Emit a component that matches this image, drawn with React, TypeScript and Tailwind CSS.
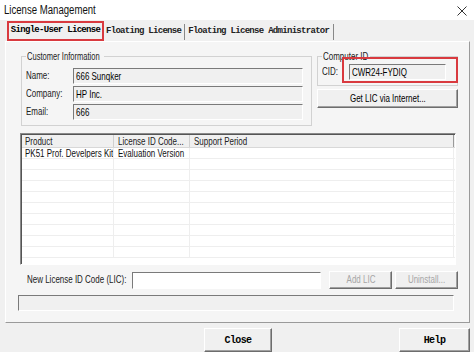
import React from "react";

const sans = { fontFamily: '"Liberation Sans", Arial, sans-serif' } as React.CSSProperties;
const mono = { fontFamily: '"Liberation Mono", "Courier New", monospace' } as React.CSSProperties;

function T({ children, center = false }: { children: React.ReactNode; center?: boolean }) {
  return (
    <span className={`inline-block whitespace-nowrap scale-x-[0.76] ${center ? "origin-center" : "origin-left"}`}>
      {children}
    </span>
  );
}

function Field({ value, className = "" }: { value: string; className?: string }) {
  return (
    <div
      className={`h-[16px] border-t border-l border-t-[#7a7a7a] border-l-[#7a7a7a] border-b border-r border-b-white border-r-white bg-[#f0f0f0] pl-[2px] text-[10.5px] leading-[14px] text-black overflow-hidden ${className}`}
    >
      <T>{value}</T>
    </div>
  );
}

function Button({ label, disabled = false, className = "" }: { label: string; disabled?: boolean; className?: string }) {
  return (
    <div
      className={`flex items-center justify-center border border-t-white border-l-white border-r-[#6d6d6d] border-b-[#6d6d6d] bg-[#f0f0f0] shadow-[inset_-1px_-1px_0_#a0a0a0] text-[10.5px] ${disabled ? "text-[#a6a6a6]" : "text-black"} ${className}`}
    >
      <T center>{label}</T>
    </div>
  );
}

export default function App() {
  const rows = Array.from({ length: 10 });
  return (
    <div className="w-[474px] h-[352px] overflow-hidden bg-[#f0f0f0] text-black" style={sans}>
      {/* title bar */}
      <div className="h-[20px] bg-white flex items-center justify-between pl-[4px] pr-[7px]">
        <span className="text-[12px] text-[#111] inline-block whitespace-nowrap origin-left scale-x-[0.8]">License Management</span>
        <svg width="10" height="10" viewBox="0 0 10 10" className="mt-[2px]">
          <path d="M0.5 0.5 L9.5 9.5 M9.5 0.5 L0.5 9.5" stroke="#333" strokeWidth="1" />
        </svg>
      </div>

      <div className="pl-[5px] pr-[4px]">
        {/* tabs */}
        <div className="h-[21px] flex items-end" style={mono}>
          <div className="relative h-[20px] ml-[2px] w-[97px] border-2 border-[#d93a3f] flex items-center justify-center text-[9px] tracking-[-0.7px] font-bold">
            Single-User License
          </div>
          <div className="h-[18px] flex items-center text-[9px] tracking-[-0.7px] font-bold text-[#222] ml-[2px]">
            Floating License
          </div>
          <div className="h-[16px] w-px bg-[#888] mx-[3px] mb-[1px]" />
          <div className="h-[18px] flex items-center text-[9px] tracking-[-0.7px] font-bold text-[#222]">
            Floating License Administrator
          </div>
          <div className="h-[16px] w-px bg-[#888] ml-[4px] mb-[1px]" />
        </div>

        {/* panel */}
        <div className="h-[282px] border border-t-white border-l-white border-r-[#9a9a9a] border-b-[#9a9a9a] bg-[#f5f5f5]">
          <div className="flex pl-[15px] pt-[8px]">
            <fieldset className="w-[291px] h-[76px] border border-[#d2d2d2] pl-[4px] pr-[8px] pt-[6px]">
              <legend className="px-[1px] text-[10.5px] leading-[12px] text-[#222]">
                <span className="inline-block whitespace-nowrap origin-left scale-x-[0.72] w-[76px]">Customer Information</span>
              </legend>
              <div className="flex flex-col gap-[2px] text-[10.5px] text-[#222]">
                <div className="flex items-center">
                  <span className="w-[47px]"><T>Name:</T></span>
                  <Field value="666 Sunqker" className="flex-1" />
                </div>
                <div className="flex items-center">
                  <span className="w-[47px]"><T>Company:</T></span>
                  <Field value="HP Inc." className="flex-1" />
                </div>
                <div className="flex items-center">
                  <span className="w-[47px]"><T>Email:</T></span>
                  <Field value="666" className="flex-1" />
                </div>
              </div>
            </fieldset>

            <div className="ml-[5px] flex flex-col">
              <fieldset className="relative w-[141px] h-[36px] border border-[#d2d2d2] pl-[4px] pr-[11px] pt-[2px]">
                <legend className="px-[1px] text-[10.5px] leading-[12px] text-[#222]">
                  <span className="inline-block whitespace-nowrap origin-left scale-x-[0.76] w-[46px]">Computer ID</span>
                </legend>
                <div className="flex items-center text-[10.5px] text-[#222]">
                  <span className="w-[27px]"><T>CID:</T></span>
                  <Field value="CWR24-FYDIQ" className="flex-1" />
                </div>
                <div className="absolute left-[24px] top-[-5px] w-[116px] h-[26px] border-2 border-[#d93a3f]" />
              </fieldset>
              <Button label="Get LIC via Internet..." className="mt-[3px] w-[141px] h-[19px]" />
            </div>
          </div>

          {/* list */}
          <div className="ml-[14px] mt-[7px] w-[436px] h-[132px] border border-t-[#8a8a8a] border-l-[#8a8a8a] border-r-white border-b-white shadow-[inset_1px_1px_0_#555] bg-white overflow-hidden">
            <div className="flex h-[13px] bg-[#f0f0f0] border-b border-[#d8d8d8] text-[10.5px] leading-[13px] text-[#222] ml-[1px] mt-[1px]">
              <div className="w-[92px] pl-[3px] border-r border-[#d0d0d0]"><T>Product</T></div>
              <div className="w-[76px] pl-[4px] border-r border-[#d0d0d0] overflow-hidden"><T>License ID Code...</T></div>
              <div className="w-[264px] pl-[4px] border-r border-[#9a9a9a]"><T>Support Period</T></div>
            </div>
            {rows.map((_, i) => (
              <div key={i} className="flex h-[11px] border-b border-[#eeeeee] text-[10.5px] leading-[11px] text-[#111] ml-[1px]">
                <div className="w-[92px] pl-[3px] border-r border-[#eeeeee] overflow-hidden">
                  {i === 0 ? <T>PK51 Prof. Develpers Kit</T> : null}
                </div>
                <div className="w-[76px] pl-[4px] border-r border-[#eeeeee] overflow-hidden">
                  {i === 0 ? <T>Evaluation Version</T> : null}
                </div>
                <div className="w-[264px] border-r border-[#eeeeee]" />
              </div>
            ))}
          </div>

          {/* LIC row */}
          <div className="flex items-center mt-[6px] h-[18px] text-[10.5px] text-[#222]">
            <span className="ml-[21px] w-[104px]"><T>New License ID Code (LIC):</T></span>
            <div className="ml-[1px] w-[189px] h-[17px] border border-t-[#7a7a7a] border-l-[#7a7a7a] border-r-white border-b-white bg-white" />
            <Button label="Add LIC" disabled className="ml-[8px] w-[63px] h-[18px]" />
            <Button label="Uninstall..." disabled className="ml-[3px] w-[63px] h-[18px]" />
          </div>

          {/* status */}
          <div className="ml-[12px] mt-[6px] w-[436px] h-[16px] border border-t-[#7a7a7a] border-l-[#7a7a7a] border-r-white border-b-white bg-[#f0f0f0]" />
        </div>

        {/* bottom buttons */}
        <div className="flex mt-[5px]" style={mono}>
          <div className="ml-[199px] w-[68px] h-[24px] flex items-center justify-center border border-t-white border-l-white border-r-[#6d6d6d] border-b-[#6d6d6d] shadow-[inset_-1px_-1px_0_#a0a0a0] text-[10px] tracking-[-0.6px] font-bold">
            Close
          </div>
          <div className="ml-[127px] w-[71px] h-[24px] flex items-center justify-center border border-t-white border-l-white border-r-[#6d6d6d] border-b-[#6d6d6d] shadow-[inset_-1px_-1px_0_#a0a0a0] text-[10px] tracking-[-0.6px] font-bold">
            Help
          </div>
        </div>
      </div>
    </div>
  );
}
